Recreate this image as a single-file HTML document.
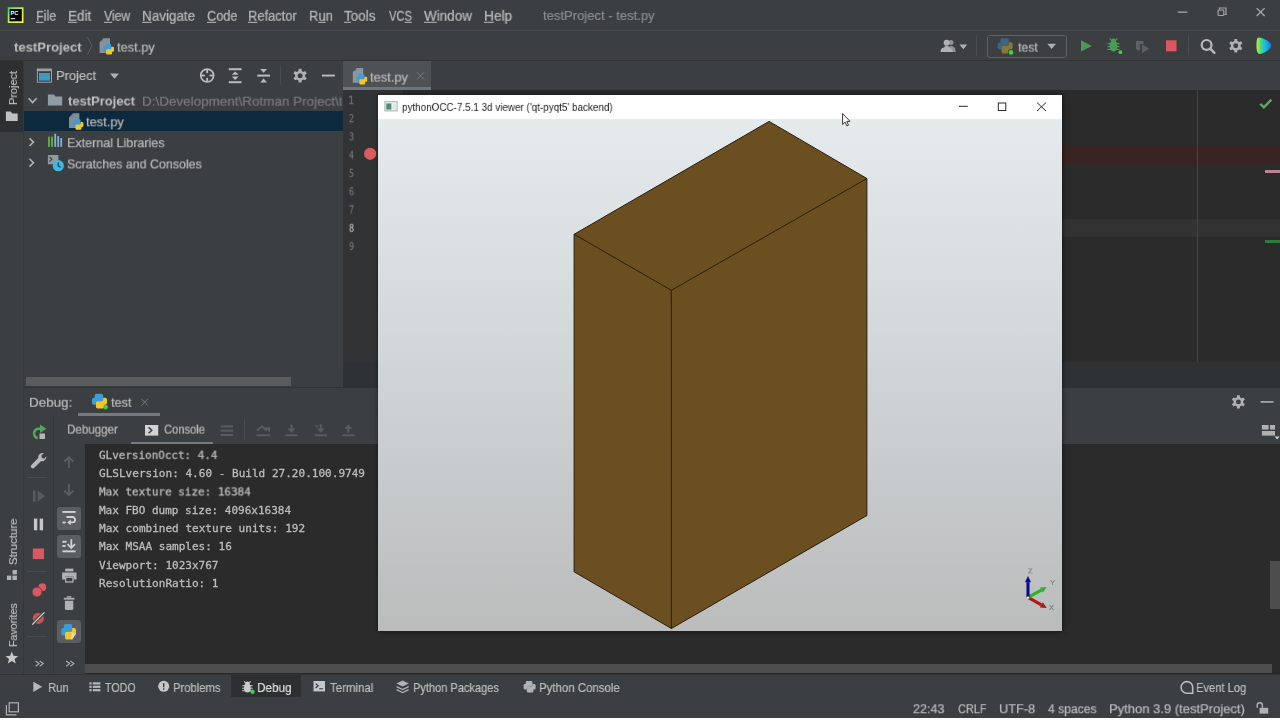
<!DOCTYPE html>
<html lang="en">
<head>
<meta charset="utf-8">
<title>testProject - test.py</title>
<style>
html,body{margin:0;padding:0;background:#3c3f41;overflow:hidden}
#app{position:relative;width:1280px;height:720px;overflow:hidden;background:#3c3f41;font-family:"Liberation Sans",Arial,sans-serif;font-size:13px;color:#bbb}
.b{position:absolute;box-sizing:border-box}
.i{position:absolute;display:block;overflow:visible}
.t{position:absolute;white-space:pre;line-height:0;transform-origin:0 50%;display:block;will-change:transform;-webkit-text-stroke:0.22px currentColor}
.t u{text-decoration:underline;text-decoration-thickness:1px;text-underline-offset:1px}
.v{transform-origin:0 0}
.m{font-family:"DejaVu Sans Mono","Liberation Mono",monospace;-webkit-text-stroke-width:0.3px}

</style>
</head>
<body>
<div id="app">
<div class="b menubar" style="left:0px;top:0px;width:1280px;height:30px;background:#3c3f41;"></div>
<div class="b " style="left:0px;top:30px;width:1280px;height:1px;background:#4b4e50;"></div>
<div class="b navbar" style="left:0px;top:31px;width:1280px;height:29px;background:#3c3f41;"></div>
<div class="b " style="left:0px;top:60px;width:1280px;height:1px;background:#323232;"></div>
<div class="b stripe" style="left:0px;top:61px;width:24px;height:614px;background:#3c3f41;border-right:1px solid #35383a;"></div>
<div class="b stripe-sel" style="left:0px;top:61px;width:23px;height:71px;background:#2d2f30;"></div>
<div class="b project" style="left:24px;top:61px;width:319px;height:326px;background:#3c3f41;"></div>
<div class="b sel" style="left:24px;top:110.6px;width:319px;height:20.4px;background:#0d293e;"></div>
<div class="b " style="left:26px;top:377px;width:265px;height:9px;background:#595b5d;"></div>
<div class="b tabs" style="left:343px;top:61px;width:937px;height:29px;background:#3c3f41;"></div>
<div class="b tab" style="left:343px;top:61px;width:88px;height:29px;background:#4e5254;"></div>
<div class="b " style="left:343px;top:86.6px;width:87.7px;height:3.4px;background:#6e757b;"></div>
<div class="b editor" style="left:343px;top:90px;width:937px;height:297px;background:#2b2b2b;"></div>
<div class="b gutter" style="left:343px;top:90px;width:60px;height:297px;background:#313335;"></div>
<div class="b " style="left:403px;top:144.5px;width:877px;height:18.5px;background:#3a2323;"></div>
<div class="b " style="left:403px;top:219px;width:877px;height:18px;background:#323232;"></div>
<div class="b " style="left:1197px;top:90px;width:1px;height:272.4px;background:#424445;"></div>
<div class="b breadcrumbs" style="left:343px;top:362.4px;width:937px;height:24.6px;background:#2f3234;"></div>
<div class="b " style="left:1265px;top:170px;width:15px;height:3px;background:#c0809a;"></div>
<div class="b " style="left:1265px;top:240px;width:15px;height:3px;background:#2a7d3c;"></div>
<div class="b " style="left:24px;top:387px;width:1256px;height:1px;background:#323232;"></div>
<div class="b debug-head" style="left:24px;top:388px;width:1256px;height:28px;background:#3c3f41;"></div>
<div class="b " style="left:78px;top:413px;width:82px;height:3px;background:#747a80;"></div>
<div class="b debug-tabs" style="left:24px;top:416px;width:1256px;height:28px;background:#3c3f41;"></div>
<div class="b " style="left:131px;top:442px;width:82px;height:3px;background:#747a80;"></div>
<div class="b " style="left:24px;top:444px;width:30px;height:231px;background:#3c3f41;"></div>
<div class="b " style="left:53px;top:416px;width:1px;height:259px;background:#35383a;"></div>
<div class="b " style="left:54px;top:444px;width:31px;height:231px;background:#3c3f41;"></div>
<div class="b console" style="left:84.5px;top:444px;width:1195.5px;height:231px;background:#2b2b2b;"></div>
<div class="b " style="left:84.5px;top:664px;width:1187.9px;height:9.1px;background:#4e4e4e;"></div>
<div class="b " style="left:1270px;top:561px;width:10px;height:48px;background:#4d4d4d;"></div>
<div class="b " style="left:27px;top:477px;width:20px;height:1px;background:#4a4d4f;"></div>
<div class="b " style="left:27px;top:571px;width:20px;height:1px;background:#4a4d4f;"></div>
<div class="b " style="left:27px;top:636px;width:20px;height:1px;background:#4a4d4f;"></div>
<div class="b " style="left:57px;top:507px;width:24px;height:23px;background:#5a5e61;border-radius:3px;"></div>
<div class="b " style="left:57px;top:535px;width:24px;height:23px;background:#5a5e61;border-radius:3px;"></div>
<div class="b " style="left:57px;top:620px;width:24px;height:23px;background:#5a5e61;border-radius:3px;"></div>
<div class="b " style="left:0px;top:674px;width:1280px;height:1px;background:#323232;"></div>
<div class="b toolbar-bottom" style="left:0px;top:675px;width:1280px;height:25px;background:#3c3f41;"></div>
<div class="b " style="left:231px;top:675px;width:70px;height:22px;background:#2d2f30;"></div>
<div class="b status" style="left:0px;top:700px;width:1280px;height:18px;background:#3c3f41;"></div>
<div class="b " style="left:0px;top:718px;width:1280px;height:2px;background:#ffffff;"></div>
<div class="b " style="left:976px;top:35px;width:1px;height:21px;background:#494c4e;"></div>
<div class="b " style="left:1188px;top:35px;width:1px;height:20px;background:#494c4e;"></div>
<div class="b " style="left:280px;top:65px;width:1px;height:20px;background:#494c4e;"></div>
<div class="b " style="left:244px;top:419px;width:1px;height:21px;background:#494c4e;"></div>
<div class="b " style="left:987px;top:34.5px;width:79.5px;height:23px;background:transparent;border:1px solid #5e6163;border-radius:3px;"></div>
<div class="b viewer" style="left:378.4px;top:94.5px;width:683.2px;height:536.5px;background:#ffffff;box-shadow:0 0 5px 0.5px rgba(0,0,0,.6);"></div>
<div class="b viewport" style="left:378.4px;top:118.9px;width:683.2px;height:512.1px;background:linear-gradient(#e5eaed,#cfd4d6 50%,#bbbcbc);"></div>
<svg class="i" style="left:378.5px;top:119px;" width="683" height="512" viewBox="0 0 683 512"><polygon points="390.1,2.4 487.9,59.5 487.9,396.5 292.4,509.5 195.1,452.8 195.1,115.3" fill="#6b4f20" stroke="#2a1f0c" stroke-width="1" stroke-linejoin="round"/><polyline points="195.1,115.3 292.3,171.3 487.9,59.5" fill="none" stroke="#2a1f0c" stroke-width="1"/><polyline points="292.3,171.3 292.4,509.5" fill="none" stroke="#2a1f0c" stroke-width="1"/></svg>
<svg class="i" style="left:6px;top:6px;" width="19" height="18" viewBox="6 6 19 18"><defs><linearGradient id="pcg" x1="0" y1="0" x2="1" y2="1"><stop offset="0" stop-color="#21d789"/><stop offset=".35" stop-color="#b6e84a"/><stop offset="1" stop-color="#fcf84a"/></linearGradient></defs><rect x="7.75" y="7.25" width="15.75" height="15.75" fill="url(#pcg)" /><rect x="9.5" y="9" width="12.3" height="12.3" fill="#000" /><text x="10.5" y="14.9" font-family="Liberation Sans,Arial,sans-serif" font-weight="bold" font-size="5.6" fill="#fff">PC</text><rect x="10.6" y="18.2" width="4.6" height="1" fill="#fff" /></svg>
<svg class="i" style="left:1176px;top:7px;" width="17" height="10" viewBox="1176 7 17 10"><rect x="1177.8" y="11.5" width="9.6" height="1.3" fill="#a6a8aa" /></svg>
<svg class="i" style="left:1216px;top:6px;" width="12" height="11" viewBox="1216 6 12 11"><rect x="1218.1" y="10" width="5.7" height="5.5" fill="none" stroke="#a2a4a6" stroke-width="1.2" rx="0.8"/><polyline points="1219.4,9.4 1219.4,8 1226,8 1226,14.4 1224.4,14.4" fill="none" stroke="#a2a4a6" stroke-width="1.2" /></svg>
<svg class="i" style="left:1255px;top:7px;" width="12" height="10" viewBox="1255 7 12 10"><polyline points="1256.7,8.1 1264.6,16" fill="none" stroke="#a8aaac" stroke-width="1.3" /><polyline points="1264.6,8.1 1256.7,16" fill="none" stroke="#a8aaac" stroke-width="1.3" /></svg>
<svg class="i" style="left:86px;top:36px;" width="8" height="20" viewBox="86 36 8 20"><polyline points="87.6,37.3 92,45.8 87.6,54.3" fill="none" stroke="#5e6163" stroke-width="1" /></svg>
<svg class="i" style="left:98px;top:37px;" width="17" height="19" viewBox="98 37 17 19"><polygon points="103.5,38.2 110,38.2 110,52.9 99.6,52.9 99.6,42.1" fill="#9aa7b0" opacity=".8"/><polygon points="99.6,41.5 102.9,41.5 102.9,38.2" fill="#3c3f41" opacity=".35"/><g opacity="1.0"><path d="M106.51 44.1 H109.93 Q111.22 44.1 111.22 45.36 V48.3 Q111.22 49.35 109.93 49.35 H107.37 Q106.08 49.35 106.08 50.61 V51.87 H104.58 Q103.3 51.87 103.3 50.61 V48.09 Q103.3 46.83 104.58 46.83 H105.23 V45.36 Q105.23 44.1 106.51 44.1Z" fill="#3c9dd8" /><path d="M110.79 54.6 H107.37 Q106.08 54.6 106.08 53.34 V50.4 Q106.08 49.35 107.37 49.35 H109.93 Q111.22 49.35 111.22 48.09 V46.83 H112.72 Q114 46.83 114 48.09 V50.61 Q114 51.87 112.72 51.87 H112.07 V53.34 Q112.07 54.6 110.79 54.6Z" fill="#f4c62a" /></g></svg>
<svg class="i" style="left:939px;top:38px;" width="18" height="15" viewBox="939 38 18 15"><circle cx="951" cy="42.6" r="2.5" fill="#8f9193" /><path d="M947.5 51.9 C947.5 47 949 46 951 46 C953.5 46 955.6 47.5 955.6 51.9Z" fill="#8f9193" /><circle cx="946.6" cy="42.8" r="3" fill="#afb1b3" /><path d="M940.6 51.9 C940.6 48.5 942.5 47.6 944.6 47.2 L944.6 46 L948.6 46 L948.6 47.2 C950.8 47.6 952.6 48.5 952.6 51.9Z" fill="#afb1b3" /></svg>
<svg class="i" style="left:958px;top:43px;" width="11" height="8" viewBox="958 43 11 8"><polygon points="959.5,44.6 967.2,44.6 963.35,49.3" fill="#afb1b3" /></svg>
<svg class="i" style="left:996px;top:37px;" width="19" height="19" viewBox="996 37 19 19"><g opacity="0.42"><path d="M1002.17 38.2 H1006.94 Q1008.73 38.2 1008.73 40.05 V44.36 Q1008.73 45.9 1006.94 45.9 H1003.36 Q1001.57 45.9 1001.57 47.75 V49.6 H999.49 Q997.7 49.6 997.7 47.75 V44.05 Q997.7 42.2 999.49 42.2 H1000.38 V40.05 Q1000.38 38.2 1002.17 38.2Z" fill="#3c9dd8" /><path d="M1008.13 53.6 H1003.36 Q1001.57 53.6 1001.57 51.75 V47.44 Q1001.57 45.9 1003.36 45.9 H1006.94 Q1008.73 45.9 1008.73 44.05 V42.2 H1010.81 Q1012.6 42.2 1012.6 44.05 V47.75 Q1012.6 49.6 1010.81 49.6 H1009.92 V51.75 Q1009.92 53.6 1008.13 53.6Z" fill="#f4c62a" /></g><circle cx="1011" cy="52.4" r="3.1" fill="#3c3f41" /><circle cx="1011" cy="52.4" r="2.3" fill="#3fd13f" /></svg>
<svg class="i" style="left:1046px;top:42px;" width="11" height="8" viewBox="1046 42 11 8"><polygon points="1047.3,43.7 1056,43.7 1051.65,49" fill="#afb1b3" /></svg>
<svg class="i" style="left:1080px;top:39px;" width="13" height="14" viewBox="1080 39 13 14"><polygon points="1081,40.2 1091.8,45.9 1081,51.6" fill="#499c54" /></svg>
<svg class="i" style="left:1106px;top:37px;" width="18" height="19" viewBox="1106 37 18 19"><ellipse cx="1113.5" cy="46.13" rx="4" ry="5.38" fill="#499c54"/><circle cx="1113.5" cy="41.02" r="2.48" fill="#499c54" /><polyline points="1107.43,43.57 1119.57,43.57" fill="none" stroke="#499c54" stroke-width="1.173" /><polyline points="1107.43,46.54 1119.57,46.54" fill="none" stroke="#499c54" stroke-width="1.173" /><polyline points="1107.43,49.44 1119.57,49.44" fill="none" stroke="#499c54" stroke-width="1.173" /><polyline points="1109.7,38.4 1112.12,41.16" fill="none" stroke="#499c54" stroke-width="1.173" /><polyline points="1117.3,38.4 1114.88,41.16" fill="none" stroke="#499c54" stroke-width="1.173" /><circle cx="1120.4" cy="52.2" r="2.6" fill="#3c3f41" /><circle cx="1120.4" cy="52.2" r="1.9" fill="#3fd13f" /></svg>
<svg class="i" style="left:1134px;top:39px;" width="17" height="15" viewBox="1134 39 17 15"><path d="M1136 41 H1143.5 V44 H1140 V49.5 L1138.5 51 L1136 48.5Z" fill="#5e6163" /><polygon points="1142.2,44.6 1149.4,48.8 1142.2,53" fill="#5e6163" /></svg>
<svg class="i" style="left:1165px;top:39px;" width="13" height="14" viewBox="1165 39 13 14"><rect x="1166" y="40.3" width="10.5" height="11" fill="#db5860" /></svg>
<svg class="i" style="left:1199px;top:37px;" width="18" height="18" viewBox="1199 37 18 18"><circle cx="1206.6" cy="44.9" r="4.9" fill="none" stroke="#b9bbbd" stroke-width="2.2" /><polyline points="1210.2,48.6 1214.4,52.9" fill="none" stroke="#b9bbbd" stroke-width="2.4" stroke-linecap="round"/></svg>
<svg class="i" style="left:1228px;top:38px;" width="16" height="16" viewBox="1228 38 16 16"><path d="M1234.24 40.98 L1234.43 38.94 L1237.17 38.94 L1237.36 40.98 L1239.1 41.99 L1240.97 41.13 L1242.34 43.51 L1240.67 44.7 L1240.67 46.7 L1242.34 47.89 L1240.97 50.27 L1239.1 49.41 L1237.36 50.42 L1237.17 52.46 L1234.43 52.46 L1234.24 50.42 L1232.5 49.41 L1230.63 50.27 L1229.26 47.89 L1230.93 46.7 L1230.93 44.7 L1229.26 43.51 L1230.63 41.13 L1232.5 41.99Z M1238.28 45.7 A2.48 2.48 0 1 0 1233.32 45.7 A2.48 2.48 0 1 0 1238.28 45.7Z" fill="#afb1b3" fill-rule="evenodd" stroke-linejoin="round"/></svg>
<svg class="i" style="left:1255px;top:36px;" width="18" height="20" viewBox="1255 36 18 20"><defs><linearGradient id="spg" x1="0" y1="0" x2="1" y2="0"><stop offset="0" stop-color="#d4ea3c"/><stop offset=".3" stop-color="#3ddc84"/><stop offset=".6" stop-color="#18b8e8"/><stop offset="1" stop-color="#1f6fe0"/></linearGradient></defs><path d="M1258.6 37.6 C1263 37.6 1271.4 42.2 1271.4 45.6 C1271.4 49.3 1263.5 54 1259.6 54 C1257.4 54 1256.5 50.5 1256.5 45.8 C1256.5 41 1257 37.6 1258.6 37.6Z" fill="url(#spg)" /></svg>
<svg class="i" style="left:35px;top:67px;" width="18" height="17" viewBox="35 67 18 17"><rect x="37.4" y="69.2" width="14.1" height="13" fill="#3c3f41" stroke="#9aa0a6" stroke-width="1" /><rect x="36.9" y="68.7" width="15.1" height="2.5" fill="#9aa0a6" /><rect x="39" y="73" width="11" height="7.6" fill="#3a9bc4" /></svg>
<svg class="i" style="left:109px;top:72px;" width="11" height="8" viewBox="109 72 11 8"><polygon points="110,73.4 119,73.4 114.5,78.7" fill="#afb1b3" /></svg>
<svg class="i" style="left:198px;top:67px;" width="18" height="17" viewBox="198 67 18 17"><circle cx="207.2" cy="75.5" r="6.4" fill="none" stroke="#b9bbbd" stroke-width="1.8" /><polyline points="207.2,69 207.2,73.2" fill="none" stroke="#b9bbbd" stroke-width="1.8" /><polyline points="207.2,77.8 207.2,82" fill="none" stroke="#b9bbbd" stroke-width="1.8" /><polyline points="200.7,75.5 204.9,75.5" fill="none" stroke="#b9bbbd" stroke-width="1.8" /><polyline points="209.5,75.5 213.7,75.5" fill="none" stroke="#b9bbbd" stroke-width="1.8" /></svg>
<svg class="i" style="left:227px;top:67px;" width="16" height="17" viewBox="227 67 16 17"><rect x="228.8" y="68.2" width="12.7" height="2" fill="#b9bbbd" /><rect x="228.8" y="81.2" width="12.7" height="2" fill="#b9bbbd" /><polygon points="231.8,74.8 238.6,74.8 235.2,71.4" fill="#b9bbbd" /><polygon points="231.8,76.6 238.6,76.6 235.2,80" fill="#b9bbbd" /></svg>
<svg class="i" style="left:256px;top:67px;" width="15" height="17" viewBox="256 67 15 17"><rect x="257.3" y="74.6" width="12.7" height="2" fill="#b9bbbd" /><polygon points="260.2,69 267,69 263.6,72.8" fill="#b9bbbd" /><polygon points="260.2,82.4 267,82.4 263.6,78.6" fill="#b9bbbd" /></svg>
<svg class="i" style="left:292px;top:67px;" width="16" height="17" viewBox="292 67 16 17"><path d="M298.51 70.92 L298.71 68.84 L301.49 68.84 L301.69 70.92 L303.45 71.93 L305.35 71.07 L306.74 73.47 L305.04 74.68 L305.04 76.72 L306.74 77.93 L305.35 80.33 L303.45 79.47 L301.69 80.48 L301.49 82.56 L298.71 82.56 L298.51 80.48 L296.75 79.47 L294.85 80.33 L293.46 77.93 L295.16 76.72 L295.16 74.68 L293.46 73.47 L294.85 71.07 L296.75 71.93Z M302.62 75.7 A2.52 2.52 0 1 0 297.58 75.7 A2.52 2.52 0 1 0 302.62 75.7Z" fill="#afb1b3" fill-rule="evenodd" stroke-linejoin="round"/></svg>
<svg class="i" style="left:320px;top:73px;" width="16" height="5" viewBox="320 73 16 5"><rect x="321.9" y="74.6" width="12.9" height="1.9" fill="#b9bbbd" /></svg>
<svg class="i" style="left:4px;top:109px;" width="15" height="14" viewBox="4 109 15 14"><path d="M5.9 111.5 H10.8 L12.2 113.5 H17.7 V121 H5.9Z" fill="#bfc1c3" /></svg>
<svg class="i" style="left:5px;top:568px;" width="14" height="14" viewBox="5 568 14 14"><rect x="6.9" y="575.6" width="4.4" height="4.4" fill="#afb1b3" /><rect x="12.5" y="575.6" width="4.4" height="4.4" fill="#afb1b3" /><rect x="12.5" y="570" width="4.4" height="4.4" fill="#afb1b3" /></svg>
<svg class="i" style="left:4px;top:650px;" width="16" height="15" viewBox="4 650 16 15"><polygon points="11.8,651.5 13.5,655.85 18.17,656.13 14.56,659.1 15.74,663.62 11.8,661.1 7.86,663.62 9.04,659.1 5.43,656.13 10.1,655.85" fill="#c8c8c8" /></svg>
<svg class="i" style="left:27px;top:96px;" width="12" height="9" viewBox="27 96 12 9"><polyline points="28.6,98.2 32.6,102.6 36.6,98.2" fill="none" stroke="#afb1b3" stroke-width="1.6" /></svg>
<svg class="i" style="left:46px;top:93px;" width="18" height="14" viewBox="46 93 18 14"><path d="M47.9 94.5 H54 L55.6 96.6 H62.2 V105.6 H47.9Z" fill="#909ca4" /></svg>
<svg class="i" style="left:68px;top:112px;" width="17" height="19" viewBox="68 112 17 19"><polygon points="72.9,113.3 79.4,113.3 79.4,128 69,128 69,117.2" fill="#9aa7b0" opacity=".8"/><polygon points="69,116.6 72.3,116.6 72.3,113.3" fill="#3c3f41" opacity=".35"/><g opacity="1.0"><path d="M75.91 119.2 H79.33 Q80.62 119.2 80.62 120.46 V123.4 Q80.62 124.45 79.33 124.45 H76.77 Q75.48 124.45 75.48 125.71 V126.97 H73.98 Q72.7 126.97 72.7 125.71 V123.19 Q72.7 121.93 73.98 121.93 H74.63 V120.46 Q74.63 119.2 75.91 119.2Z" fill="#3c9dd8" /><path d="M80.19 129.7 H76.77 Q75.48 129.7 75.48 128.44 V125.5 Q75.48 124.45 76.77 124.45 H79.33 Q80.62 124.45 80.62 123.19 V121.93 H82.12 Q83.4 121.93 83.4 123.19 V125.71 Q83.4 126.97 82.12 126.97 H81.47 V128.44 Q81.47 129.7 80.19 129.7Z" fill="#f4c62a" /></g></svg>
<svg class="i" style="left:28px;top:136px;" width="8" height="12" viewBox="28 136 8 12"><polyline points="29.5,138.2 33.4,142.1 29.5,146" fill="none" stroke="#afb1b3" stroke-width="1.6" /></svg>
<svg class="i" style="left:46px;top:132px;" width="18" height="16" viewBox="46 132 18 16"><rect x="48.1" y="136.6" width="1.8" height="10.3" fill="#62b543" /><rect x="51.1" y="136.6" width="1.8" height="10.3" fill="#62b543" /><rect x="54.3" y="133.8" width="1.8" height="13.1" fill="#7fb2d6" /><rect x="57.3" y="136" width="1.8" height="10.9" fill="#7fb2d6" /><rect x="60.3" y="138" width="1.8" height="8.9" fill="#7fb2d6" /></svg>
<svg class="i" style="left:28px;top:157px;" width="8" height="12" viewBox="28 157 8 12"><polyline points="29.5,158.8 33.4,162.7 29.5,166.6" fill="none" stroke="#afb1b3" stroke-width="1.6" /></svg>
<svg class="i" style="left:46px;top:154px;" width="19" height="19" viewBox="46 154 19 19"><rect x="47.9" y="155" width="10.5" height="9.2" fill="#8f9ba3" /><polyline points="49.5,157 52,159.3 49.5,161.6" fill="none" stroke="#3c3f41" stroke-width="1.1" /><circle cx="58.3" cy="165.7" r="5.6" fill="#40b6e0" /><polyline points="58.3,162.6 58.3,165.9 60.6,167.2" fill="none" stroke="#1f3b4a" stroke-width="1.2" /></svg>
<svg class="i" style="left:351px;top:67px;" width="18" height="19" viewBox="351 67 18 19"><polygon points="356.7,68 363.2,68 363.2,82.7 352.8,82.7 352.8,71.9" fill="#9aa7b0" opacity=".8"/><polygon points="352.8,71.3 356.1,71.3 356.1,68" fill="#3c3f41" opacity=".35"/><g opacity="1.0"><path d="M359.71 73.9 H363.13 Q364.42 73.9 364.42 75.16 V78.1 Q364.42 79.15 363.13 79.15 H360.57 Q359.28 79.15 359.28 80.41 V81.67 H357.78 Q356.5 81.67 356.5 80.41 V77.89 Q356.5 76.63 357.78 76.63 H358.43 V75.16 Q358.43 73.9 359.71 73.9Z" fill="#3c9dd8" /><path d="M363.99 84.4 H360.57 Q359.28 84.4 359.28 83.14 V80.2 Q359.28 79.15 360.57 79.15 H363.13 Q364.42 79.15 364.42 77.89 V76.63 H365.92 Q367.2 76.63 367.2 77.89 V80.41 Q367.2 81.67 365.92 81.67 H365.27 V83.14 Q365.27 84.4 363.99 84.4Z" fill="#f4c62a" /></g></svg>
<svg class="i" style="left:415px;top:71px;" width="11" height="10" viewBox="415 71 11 10"><polyline points="417,72.3 424,79.4" fill="none" stroke="#7a7d7f" stroke-width="1" /><polyline points="424,72.3 417,79.4" fill="none" stroke="#7a7d7f" stroke-width="1" /></svg>
<svg class="i" style="left:363px;top:146px;" width="15" height="15" viewBox="363 146 15 15"><circle cx="370.1" cy="153.8" r="6.1" fill="#db5c5c" /></svg>
<svg class="i" style="left:1258px;top:97px;" width="16" height="13" viewBox="1258 97 16 13"><polyline points="1260.3,103.8 1263.9,107.4 1271.4,99.6" fill="none" stroke="#5aaa62" stroke-width="2.4" /></svg>
<svg class="i" style="left:383px;top:100px;" width="16" height="13" viewBox="383 100 16 13"><rect x="384.9" y="101.7" width="12.2" height="9.2" fill="#eef6f2" stroke="#a9adab" stroke-width="1" /><rect x="386.3" y="103.4" width="5.1" height="6.2" fill="#4f8b78" /><rect x="392.6" y="103.4" width="3" height="6.2" fill="#d5ebe2" /></svg>
<svg class="i" style="left:958px;top:104px;" width="11" height="5" viewBox="958 104 11 5"><rect x="959" y="105.8" width="8.8" height="1" fill="#2a2a2a" /></svg>
<svg class="i" style="left:996px;top:101px;" width="12" height="12" viewBox="996 101 12 12"><rect x="998.3" y="103" width="7.5" height="7.5" fill="none" stroke="#2a2a2a" stroke-width="1" /></svg>
<svg class="i" style="left:1035px;top:101px;" width="13" height="12" viewBox="1035 101 13 12"><polyline points="1037,102.6 1046,111" fill="none" stroke="#2a2a2a" stroke-width="1" /><polyline points="1046,102.6 1037,111" fill="none" stroke="#2a2a2a" stroke-width="1" /></svg>
<svg class="i" style="left:841px;top:112px;" width="11" height="16" viewBox="841 112 11 16"><path d="M842.6 113.6 L842.6 124.4 L845.1 122.1 L846.9 125.9 L848.5 125.1 L846.8 121.5 L850 121.3Z" fill="#ffffff" stroke="#222" stroke-width="0.9" stroke-linejoin="round"/></svg>
<svg class="i" style="left:1019px;top:569px;" width="42" height="47" viewBox="1019 569 42 47"><polyline points="1028,597.4 1041.39,604.88" fill="none" stroke="#aa1a1a" stroke-width="3.1" /><polygon points="1046.8,607.9 1039.92,607.5 1042.85,602.26" fill="#aa1a1a" /><polyline points="1028,597.4 1041.36,590.08" fill="none" stroke="#2fb02f" stroke-width="3.1" /><polygon points="1046.8,587.1 1042.8,592.71 1039.92,587.45" fill="#2fb02f" /><polyline points="1028,597.4 1028,582.2" fill="none" stroke="#0a0a8e" stroke-width="3.1" /><polygon points="1028,576 1031,582.2 1025,582.2" fill="#0a0a8e" /><circle cx="1028" cy="597.6" r="1.2" fill="#f0f0f0" /></svg>
<svg class="i" style="left:90px;top:392px;" width="20" height="19" viewBox="90 392 20 19"><g opacity="1.0"><path d="M96.5 393.8 H101.3 Q103.1 393.8 103.1 395.58 V399.72 Q103.1 401.2 101.3 401.2 H97.7 Q95.9 401.2 95.9 402.98 V404.75 H93.8 Q92 404.75 92 402.98 V399.42 Q92 397.65 93.8 397.65 H94.7 V395.58 Q94.7 393.8 96.5 393.8Z" fill="#3c9dd8" /><path d="M102.5 408.6 H97.7 Q95.9 408.6 95.9 406.82 V402.68 Q95.9 401.2 97.7 401.2 H101.3 Q103.1 401.2 103.1 399.42 V397.65 H105.2 Q107 397.65 107 399.42 V402.98 Q107 404.75 105.2 404.75 H104.3 V406.82 Q104.3 408.6 102.5 408.6Z" fill="#f4c62a" /></g><circle cx="105.6" cy="407.1" r="2.4" fill="#3fd13f" /></svg>
<svg class="i" style="left:140px;top:397px;" width="10" height="10" viewBox="140 397 10 10"><polyline points="141.4,398.8 148,405.6" fill="none" stroke="#7a7d7f" stroke-width="1" /><polyline points="148,398.8 141.4,405.6" fill="none" stroke="#7a7d7f" stroke-width="1" /></svg>
<svg class="i" style="left:1230px;top:394px;" width="17" height="16" viewBox="1230 394 17 16"><path d="M1236.86 397.25 L1237.05 395.24 L1239.75 395.24 L1239.94 397.25 L1241.65 398.24 L1243.5 397.4 L1244.85 399.74 L1243.19 400.91 L1243.19 402.89 L1244.85 404.06 L1243.5 406.4 L1241.65 405.56 L1239.94 406.55 L1239.75 408.56 L1237.05 408.56 L1236.86 406.55 L1235.15 405.56 L1233.3 406.4 L1231.95 404.06 L1233.61 402.89 L1233.61 400.91 L1231.95 399.74 L1233.3 397.4 L1235.15 398.24Z M1240.85 401.9 A2.45 2.45 0 1 0 1235.95 401.9 A2.45 2.45 0 1 0 1240.85 401.9Z" fill="#afb1b3" fill-rule="evenodd" stroke-linejoin="round"/></svg>
<svg class="i" style="left:1259px;top:400px;" width="16" height="4" viewBox="1259 400 16 4"><rect x="1260.6" y="401.1" width="12.9" height="1.6" fill="#afb1b3" /></svg>
<svg class="i" style="left:1260px;top:424px;" width="20" height="17" viewBox="1260 424 20 17"><rect x="1261.9" y="425" width="6.7" height="4.6" fill="#afb1b3" /><rect x="1270" y="425" width="5" height="4.6" fill="#afb1b3" /><rect x="1261.9" y="431" width="13.1" height="4.6" fill="#afb1b3" /><polygon points="1274.6,436.6 1279.6,436.6 1277.1,439.4" fill="#d0d0d0" /></svg>
<svg class="i" style="left:30px;top:423px;" width="18" height="18" viewBox="30 423 18 18"><path d="M37.6 438.2 A4.9 4.9 0 0 1 37.9 428.7 H40.4" fill="none" stroke="#4fa85a" stroke-width="2.5" /><polygon points="40,424.5 46.4,428.8 40,433" fill="#4fa85a" /><rect x="39.5" y="433.5" width="5.5" height="5.5" fill="#b4b6b8" /></svg>
<svg class="i" style="left:30px;top:452px;" width="18" height="17" viewBox="30 452 18 17"><path d="M31.4 464.9 L38.2 458.1 A4.6 4.6 0 0 1 43.9 453.1 L41.2 455.8 L42 458 L44.2 458.8 L46.4 456.2 A4.6 4.6 0 0 1 41 461.2 L34.3 467.8 A2 2 0 0 1 31.4 464.9Z" fill="#b7b9bb" /></svg>
<svg class="i" style="left:31px;top:489px;" width="16" height="15" viewBox="31 489 16 15"><rect x="32.9" y="490.4" width="2.7" height="11.4" fill="#585b5d" /><polygon points="37.6,490.4 45,496.1 37.6,501.8" fill="#585b5d" /></svg>
<svg class="i" style="left:32px;top:517px;" width="13" height="15" viewBox="32 517 13 15"><rect x="33.9" y="518.6" width="3.4" height="11.7" fill="#c4c6c8" /><rect x="39.7" y="518.6" width="3.4" height="11.7" fill="#c4c6c8" /></svg>
<svg class="i" style="left:31px;top:547px;" width="15" height="14" viewBox="31 547 15 14"><rect x="32.8" y="548.5" width="11.2" height="10.6" fill="#db5860" /></svg>
<svg class="i" style="left:30px;top:581px;" width="18" height="18" viewBox="30 581 18 18"><circle cx="42.3" cy="587.2" r="3.9" fill="#db5860" /><circle cx="37" cy="592" r="5" fill="#db5860" stroke="#3c3f41" stroke-width="0.8"/></svg>
<svg class="i" style="left:30px;top:610px;" width="17" height="17" viewBox="30 610 17 17"><circle cx="38.3" cy="618.4" r="5.6" fill="#c75450" /><polyline points="32.2,624.6 44.4,612.4" fill="none" stroke="#3c3f41" stroke-width="3" /><polyline points="32.2,624.6 44.4,612.4" fill="none" stroke="#d8d8d8" stroke-width="1.3" /></svg>
<svg class="i" style="left:34px;top:659px;" width="11" height="9" viewBox="34 659 11 9"><polyline points="35.6,661 39.1,663.6 35.6,666.2" fill="none" stroke="#afb1b3" stroke-width="1.1" /><polyline points="39.7,661 43.2,663.6 39.7,666.2" fill="none" stroke="#afb1b3" stroke-width="1.1" /></svg>
<svg class="i" style="left:62px;top:455px;" width="14" height="15" viewBox="62 455 14 15"><polyline points="68.9,457.4 68.9,468" fill="none" stroke="#5e6163" stroke-width="1.7" /><polyline points="64.4,461.6 68.9,457.1 73.4,461.6" fill="none" stroke="#5e6163" stroke-width="1.7" /></svg>
<svg class="i" style="left:62px;top:482px;" width="14" height="15" viewBox="62 482 14 15"><polyline points="68.9,483.8 68.9,494.6" fill="none" stroke="#5e6163" stroke-width="1.7" /><polyline points="64.4,490.6 68.9,495.1 73.4,490.6" fill="none" stroke="#5e6163" stroke-width="1.7" /></svg>
<svg class="i" style="left:60px;top:509px;" width="18" height="18" viewBox="60 509 18 18"><rect x="62.4" y="511" width="13.2" height="1.9" fill="#cfd1d3" /><path d="M66.5 517 H72.4 A2.7 2.7 0 0 1 72.4 522.4 H70" fill="none" stroke="#cfd1d3" stroke-width="1.8" /><polygon points="70.8,519.6 70.8,525.2 67.2,522.4" fill="#cfd1d3" /><rect x="62.4" y="521.5" width="3.2" height="1.9" fill="#cfd1d3" /></svg>
<svg class="i" style="left:60px;top:537px;" width="18" height="18" viewBox="60 537 18 18"><rect x="62.4" y="540.8" width="4.2" height="1.9" fill="#cfd1d3" /><rect x="62.4" y="545" width="3.2" height="1.9" fill="#cfd1d3" /><rect x="62.4" y="550.4" width="13.2" height="1.9" fill="#cfd1d3" /><polyline points="71.3,539.2 71.3,547.4" fill="none" stroke="#cfd1d3" stroke-width="1.8" /><polyline points="67.6,544.2 71.3,547.9 75,544.2" fill="none" stroke="#cfd1d3" stroke-width="1.8" /></svg>
<svg class="i" style="left:61px;top:567px;" width="17" height="17" viewBox="61 567 17 17"><rect x="65.2" y="568.6" width="8.2" height="2.8" fill="#afb1b3" /><path d="M62.1 572.6 H76.5 V579.4 H73.6 V576.6 H65 V579.4 H62.1Z" fill="#afb1b3" /><rect x="65.65" y="577.25" width="7.3" height="4.7" fill="none" stroke="#afb1b3" stroke-width="1.3" /></svg>
<svg class="i" style="left:62px;top:595px;" width="14" height="17" viewBox="62 595 14 17"><rect x="66.8" y="596.2" width="4.6" height="1.4" fill="#afb1b3" /><rect x="63.8" y="597.8" width="10.6" height="1.8" fill="#afb1b3" /><path d="M64.9 600.8 H73.3 V608.6 A1.5 1.5 0 0 1 71.8 610.1 H66.4 A1.5 1.5 0 0 1 64.9 608.6Z" fill="#afb1b3" /></svg>
<svg class="i" style="left:60px;top:622px;" width="19" height="20" viewBox="60 622 19 20"><g opacity="1.0"><path d="M65.64 624 H70.38 Q72.15 624 72.15 625.87 V630.24 Q72.15 631.8 70.38 631.8 H66.82 Q65.05 631.8 65.05 633.67 V635.54 H62.98 Q61.2 635.54 61.2 633.67 V629.93 Q61.2 628.06 62.98 628.06 H63.86 V625.87 Q63.86 624 65.64 624Z" fill="#3c9dd8" /><path d="M71.56 639.6 H66.82 Q65.05 639.6 65.05 637.73 V633.36 Q65.05 631.8 66.82 631.8 H70.38 Q72.15 631.8 72.15 629.93 V628.06 H74.22 Q76 628.06 76 629.93 V633.67 Q76 635.54 74.22 635.54 H73.34 V637.73 Q73.34 639.6 71.56 639.6Z" fill="#f4c62a" /></g><polygon points="70.6,631.5 75.4,634.2 73.6,637.6 71.6,639.4 70.6,637.6 72.4,634.6" fill="#d8dadc" /></svg>
<svg class="i" style="left:65px;top:659px;" width="11" height="9" viewBox="65 659 11 9"><polyline points="66.2,661 69.7,663.6 66.2,666.2" fill="none" stroke="#afb1b3" stroke-width="1.1" /><polyline points="70.3,661 73.8,663.6 70.3,666.2" fill="none" stroke="#afb1b3" stroke-width="1.1" /></svg>
<svg class="i" style="left:144px;top:424px;" width="16" height="13" viewBox="144 424 16 13"><rect x="145" y="425" width="13.2" height="10.6" fill="#d0d2d4" /><polyline points="148.6,427.4 151.8,430.3 148.6,433.2" fill="none" stroke="#3c3f41" stroke-width="1.5" /></svg>
<svg class="i" style="left:219px;top:424px;" width="16" height="14" viewBox="219 424 16 14"><rect x="220.6" y="425.4" width="12.4" height="2" fill="#5a5d5f" /><rect x="220.6" y="429.7" width="12.4" height="2" fill="#5a5d5f" /><rect x="220.6" y="434" width="12.4" height="2" fill="#5a5d5f" /></svg>
<svg class="i" style="left:255px;top:423px;" width="17" height="15" viewBox="255 423 17 15"><polyline points="257,430.4 261.8,426.4 267,430.6" fill="none" stroke="#5a5d5f" stroke-width="1.9" /><polygon points="264.6,427.2 270,427.2 270,432.8" fill="#5a5d5f" /><rect x="256.4" y="434.4" width="13.6" height="1.8" fill="#5a5d5f" /></svg>
<svg class="i" style="left:284px;top:423px;" width="15" height="15" viewBox="284 423 15 15"><polyline points="291.5,424.4 291.5,431" fill="none" stroke="#5a5d5f" stroke-width="2" /><polygon points="287.4,428.4 295.6,428.4 291.5,432.8" fill="#5a5d5f" /><rect x="285.4" y="434.4" width="12.2" height="1.8" fill="#5a5d5f" /></svg>
<svg class="i" style="left:313px;top:423px;" width="16" height="15" viewBox="313 423 16 15"><polyline points="320.8,424.4 320.8,431" fill="none" stroke="#5a5d5f" stroke-width="2" /><polygon points="316.7,428.4 324.9,428.4 320.8,432.8" fill="#5a5d5f" /><rect x="314.8" y="434.4" width="12.2" height="1.8" fill="#5a5d5f" /><polyline points="315.2,426.2 318.6,426.2" fill="none" stroke="#5a5d5f" stroke-width="1.4" /></svg>
<svg class="i" style="left:341px;top:423px;" width="15" height="15" viewBox="341 423 15 15"><polyline points="348.3,426.4 348.3,432.8" fill="none" stroke="#5a5d5f" stroke-width="2" /><polygon points="344.2,428.8 352.4,428.8 348.3,424.4" fill="#5a5d5f" /><rect x="342.2" y="434.4" width="12.2" height="1.8" fill="#5a5d5f" /></svg>
<svg class="i" style="left:32px;top:680px;" width="12" height="13" viewBox="32 680 12 13"><polygon points="33.3,681.7 42.2,686.8 33.3,691.9" fill="#b4b6b8" /></svg>
<svg class="i" style="left:88px;top:681px;" width="14" height="12" viewBox="88 681 14 12"><rect x="89.4" y="682.3" width="2.2" height="2.2" fill="#b4b6b8" /><rect x="92.8" y="682.3" width="7.6" height="2.2" fill="#b4b6b8" /><rect x="89.4" y="685.7" width="2.2" height="2.2" fill="#b4b6b8" /><rect x="92.8" y="685.7" width="7.6" height="2.2" fill="#b4b6b8" /><rect x="89.4" y="689.1" width="2.2" height="2.2" fill="#b4b6b8" /><rect x="92.8" y="689.1" width="7.6" height="2.2" fill="#b4b6b8" /></svg>
<svg class="i" style="left:157px;top:679px;" width="14" height="14" viewBox="157 679 14 14"><circle cx="163.7" cy="686.3" r="5.5" fill="#c4c6c8" /><rect x="163" y="683" width="1.4" height="4.3" fill="#3c3f41" /><rect x="163" y="688.3" width="1.4" height="1.5" fill="#3c3f41" /></svg>
<svg class="i" style="left:240px;top:679px;" width="16" height="16" viewBox="240 679 16 16"><ellipse cx="247.4" cy="687.91" rx="3.42" ry="4.6" fill="#c8cacc"/><circle cx="247.4" cy="683.54" r="2.12" fill="#c8cacc" /><polyline points="242.21,685.73 252.59,685.73" fill="none" stroke="#c8cacc" stroke-width="1.0030000000000001" /><polyline points="242.21,688.26 252.59,688.26" fill="none" stroke="#c8cacc" stroke-width="1.0030000000000001" /><polyline points="242.21,690.74 252.59,690.74" fill="none" stroke="#c8cacc" stroke-width="1.0030000000000001" /><polyline points="244.16,681.3 246.22,683.66" fill="none" stroke="#c8cacc" stroke-width="1.0030000000000001" /><polyline points="250.65,681.3 248.58,683.66" fill="none" stroke="#c8cacc" stroke-width="1.0030000000000001" /><circle cx="252.5" cy="691.8" r="2.2" fill="#3fd13f" /></svg>
<svg class="i" style="left:312px;top:680px;" width="15" height="13" viewBox="312 680 15 13"><rect x="313.5" y="681" width="11.5" height="10.4" fill="#c4c6c8" /><polyline points="315.6,683.6 318.2,685.8 315.6,688" fill="none" stroke="#3c3f41" stroke-width="1.2" /><rect x="319.2" y="688.2" width="3.8" height="1.1" fill="#3c3f41" /></svg>
<svg class="i" style="left:395px;top:679px;" width="15" height="15" viewBox="395 679 15 15"><polygon points="402.6,680.4 408.8,683.4 402.6,686.4 396.4,683.4" fill="#afb1b3" /><polyline points="396.6,686.6 402.6,689.5 408.6,686.6" fill="none" stroke="#afb1b3" stroke-width="1.3" /><polyline points="396.6,689.6 402.6,692.5 408.6,689.6" fill="none" stroke="#afb1b3" stroke-width="1.3" /></svg>
<svg class="i" style="left:522px;top:680px;" width="15" height="14" viewBox="522 680 15 14"><g opacity="1.0"><path d="M527.2 681 H531.04 Q532.48 681 532.48 682.39 V685.64 Q532.48 686.8 531.04 686.8 H528.16 Q526.72 686.8 526.72 688.19 V689.58 H525.04 Q523.6 689.58 523.6 688.19 V685.41 Q523.6 684.02 525.04 684.02 H525.76 V682.39 Q525.76 681 527.2 681Z" fill="#afb1b3" /><path d="M532 692.6 H528.16 Q526.72 692.6 526.72 691.21 V687.96 Q526.72 686.8 528.16 686.8 H531.04 Q532.48 686.8 532.48 685.41 V684.02 H534.16 Q535.6 684.02 535.6 685.41 V688.19 Q535.6 689.58 534.16 689.58 H533.44 V691.21 Q533.44 692.6 532 692.6Z" fill="#afb1b3" /></g></svg>
<svg class="i" style="left:1179px;top:680px;" width="16" height="15" viewBox="1179 680 16 15"><path d="M1186.9 681.6 A5.8 5.8 0 1 0 1186.9 693.2 H1192.7 V687.4 A5.8 5.8 0 0 0 1186.9 681.6Z" fill="none" stroke="#b7b9bb" stroke-width="1.6" /></svg>
<svg class="i" style="left:4px;top:701px;" width="17" height="16" viewBox="4 701 17 16"><rect x="9.2" y="702.8" width="9.2" height="9" fill="none" stroke="#afb1b3" stroke-width="1.2" /><polyline points="6.4,705 6.4,714.8 16.4,714.8" fill="none" stroke="#afb1b3" stroke-width="1.2" /></svg>
<svg class="i" style="left:1255px;top:701px;" width="15" height="15" viewBox="1255 701 15 15"><rect x="1259.6" y="707.8" width="8.6" height="5.8" fill="#afb1b3" /><path d="M1257.2 707.8 V705.4 A2.6 2.6 0 0 1 1262.4 705.4 V707.8" fill="none" stroke="#afb1b3" stroke-width="1.4" /></svg>
<span class="t" style="left:36.0px;top:15.00px;font-size:14px;color:#bbbbbb;transform:translateY(0.80px) scaleX(0.9002);"><u>F</u>ile</span>
<span class="t" style="left:68.44px;top:15.00px;font-size:14px;color:#bbbbbb;transform:translateY(0.80px) scaleX(0.9641);"><u>E</u>dit</span>
<span class="t" style="left:103.6px;top:15.00px;font-size:14px;color:#bbbbbb;transform:translateY(0.80px) scaleX(0.8715);"><u>V</u>iew</span>
<span class="t" style="left:142.04px;top:15.00px;font-size:14px;color:#bbbbbb;transform:translateY(0.80px) scaleX(0.9620);"><u>N</u>avigate</span>
<span class="t" style="left:206.5px;top:15.00px;font-size:14px;color:#bbbbbb;transform:translateY(0.80px) scaleX(0.9085);"><u>C</u>ode</span>
<span class="t" style="left:248.48px;top:15.00px;font-size:14px;color:#bbbbbb;transform:translateY(0.80px) scaleX(0.9206);"><u>R</u>efactor</span>
<span class="t" style="left:309.48px;top:15.00px;font-size:14px;color:#bbbbbb;transform:translateY(0.80px) scaleX(0.9248);">R<u>u</u>n</span>
<span class="t" style="left:343.8px;top:15.00px;font-size:14px;color:#bbbbbb;transform:translateY(0.80px) scaleX(0.9638);"><u>T</u>ools</span>
<span class="t" style="left:388.6px;top:15.00px;font-size:14px;color:#bbbbbb;transform:translateY(0.80px) scaleX(0.7979);">VC<u>S</u></span>
<span class="t" style="left:424.0px;top:15.00px;font-size:14px;color:#bbbbbb;transform:translateY(0.80px) scaleX(0.9629);"><u>W</u>indow</span>
<span class="t" style="left:484.03px;top:15.00px;font-size:14px;color:#bbbbbb;transform:translateY(0.80px) scaleX(0.9748);"><u>H</u>elp</span>
<span class="t" style="left:543.1px;top:15.00px;font-size:13.5px;color:#8a8c8e;transform:translateY(0.90px) scaleX(0.9664);">testProject - test.py</span>
<span class="t" style="left:13.8px;top:47.00px;font-size:13.5px;color:#c0c0c0;font-weight:bold;transform:translateY(0.60px) scaleX(0.9690);-webkit-text-stroke-width:0;">testProject</span>
<span class="t" style="left:117.0px;top:47.00px;font-size:13.5px;color:#bbbbbb;transform:translateY(0.60px) scaleX(0.9496);">test.py</span>
<span class="t" style="left:1018.0px;top:47.00px;font-size:13.5px;color:#bbbbbb;transform:translateY(0.60px) scaleX(0.9087);">test</span>
<span class="t" style="left:55.95px;top:76.00px;font-size:13.5px;color:#bbbbbb;transform:scaleX(0.9548);">Project</span>
<span class="t" style="left:370.3px;top:77.00px;font-size:13.5px;color:#bbbbbb;transform:translateY(0.60px) scaleX(0.9546);">test.py</span>
<span class="t" style="left:67.5px;top:101.00px;font-size:13.5px;color:#c0c0c0;font-weight:bold;transform:translateY(0.50px) scaleX(0.9605);-webkit-text-stroke-width:0;">testProject</span>
<div class="b" style="left:141.5px;top:89px;width:200.5px;height:22px;overflow:hidden"><span class="t" style="left:0;top:12.00px;font-size:13.5px;color:#797b7d;transform:translateY(0.70px) scaleX(0.9973);">D:\Development\Rotman Project\t</span></div>
<span class="t" style="left:86.3px;top:122.00px;font-size:13.5px;color:#bbbbbb;transform:translateY(0.30px) scaleX(0.9521);">test.py</span>
<span class="t" style="left:66.57px;top:143.00px;font-size:13.5px;color:#bbbbbb;transform:translateY(0.20px) scaleX(0.9291);">External Libraries</span>
<span class="t" style="left:66.9px;top:164.00px;font-size:13.5px;color:#bbbbbb;transform:translateY(0.40px) scaleX(0.9217);">Scratches and Consoles</span>
<span class="t m" style="left:348.44px;top:99.00px;font-size:10.5px;color:#6c6f72;transform:translateY(0.80px) scaleX(0.9600);">1</span>
<span class="t m" style="left:349.4px;top:118.00px;font-size:10.5px;color:#6c6f72;transform:translateY(0.08px) scaleX(0.8000);">2</span>
<span class="t m" style="left:349.4px;top:136.00px;font-size:10.5px;color:#6c6f72;transform:translateY(0.36px) scaleX(0.8000);">3</span>
<span class="t m" style="left:349.4px;top:154.00px;font-size:10.5px;color:#6c6f72;transform:translateY(0.64px) scaleX(0.8000);">4</span>
<span class="t m" style="left:349.4px;top:172.00px;font-size:10.5px;color:#6c6f72;transform:translateY(0.92px) scaleX(0.8000);">5</span>
<span class="t m" style="left:349.4px;top:191.00px;font-size:10.5px;color:#6c6f72;transform:translateY(0.20px) scaleX(0.8000);">6</span>
<span class="t m" style="left:349.4px;top:209.00px;font-size:10.5px;color:#6c6f72;transform:translateY(0.48px) scaleX(0.8000);">7</span>
<span class="t m" style="left:349.4px;top:227.00px;font-size:10.5px;color:#a9abad;transform:translateY(0.76px) scaleX(0.8000);">8</span>
<span class="t m" style="left:349.4px;top:246.00px;font-size:10.5px;color:#6c6f72;transform:translateY(0.04px) scaleX(0.8000);">9</span>
<span class="t" style="left:401.6px;top:106.00px;font-size:11.5px;color:#1a1a1a;transform:translateY(0.90px) scaleX(0.8585);-webkit-text-stroke-width:0;">pythonOCC-7.5.1 3d viewer (&#x27;qt-pyqt5&#x27; backend)</span>
<span class="t" style="left:1027.5px;top:571.00px;font-size:7.5px;color:#7a828c;transform:translateY(0.40px) scaleX(0.9600);">Z</span>
<span class="t" style="left:1049.8px;top:582.00px;font-size:7.5px;color:#7a828c;transform:translateY(0.60px) scaleX(1.0400);">Y</span>
<span class="t" style="left:1049.0px;top:608.00px;font-size:7.5px;color:#7a828c;transform:translateY(0.30px);">X</span>
<span class="t" style="left:28.81px;top:402.00px;font-size:13.5px;color:#bbbbbb;transform:translateY(0.80px) scaleX(0.9933);">Debug:</span>
<span class="t" style="left:111.3px;top:402.00px;font-size:13.5px;color:#bbbbbb;transform:translateY(0.80px) scaleX(0.9360);">test</span>
<span class="t" style="left:66.64px;top:429.00px;font-size:13.5px;color:#bbbbbb;transform:translateY(0.60px) scaleX(0.8589);">Debugger</span>
<span class="t" style="left:163.5px;top:429.00px;font-size:13.5px;color:#bbbbbb;transform:translateY(0.60px) scaleX(0.8261);">Console</span>
<span class="t m" style="left:98.5px;top:455.00px;font-size:11px;color:#bcbcbc;transform:translateY(0.80px) scaleX(0.9941);">GLversionOcct: 4.4</span>
<span class="t m" style="left:98.5px;top:474.00px;font-size:11px;color:#bcbcbc;transform:translateY(0.10px) scaleX(1.0042);">GLSLversion: 4.60 - Build 27.20.100.9749</span>
<span class="t m" style="left:98.5px;top:492.00px;font-size:11px;color:#bcbcbc;transform:translateY(0.40px) scaleX(0.9966);">Max texture size: 16384</span>
<span class="t m" style="left:98.5px;top:510.00px;font-size:11px;color:#bcbcbc;transform:translateY(0.70px);">Max FBO dump size: 4096x16384</span>
<span class="t m" style="left:98.5px;top:529.00px;font-size:11px;color:#bcbcbc;transform:scaleX(1.0038);">Max combined texture units: 192</span>
<span class="t m" style="left:98.5px;top:547.00px;font-size:11px;color:#bcbcbc;transform:translateY(0.30px) scaleX(1.0028);">Max MSAA samples: 16</span>
<span class="t m" style="left:98.5px;top:565.00px;font-size:11px;color:#bcbcbc;transform:translateY(0.60px) scaleX(1.0025);">Viewport: 1023x767</span>
<span class="t m" style="left:98.5px;top:583.00px;font-size:11px;color:#bcbcbc;transform:translateY(0.90px) scaleX(1.0025);">ResolutionRatio: 1</span>
<span class="t" style="left:47.96px;top:688.00px;font-size:13.5px;color:#bbbbbb;transform:scaleX(0.8384);">Run</span>
<span class="t" style="left:104.7px;top:688.00px;font-size:13.5px;color:#bbbbbb;transform:scaleX(0.7921);">TODO</span>
<span class="t" style="left:172.87px;top:688.00px;font-size:13.5px;color:#bbbbbb;transform:scaleX(0.8317);">Problems</span>
<span class="t" style="left:256.83px;top:688.00px;font-size:13.5px;color:#dcdcdc;transform:scaleX(0.8701);">Debug</span>
<span class="t" style="left:329.9px;top:688.00px;font-size:13.5px;color:#bbbbbb;transform:scaleX(0.8488);">Terminal</span>
<span class="t" style="left:412.68px;top:688.00px;font-size:13.5px;color:#bbbbbb;transform:scaleX(0.8177);">Python Packages</span>
<span class="t" style="left:538.95px;top:688.00px;font-size:13.5px;color:#bbbbbb;transform:scaleX(0.8475);">Python Console</span>
<span class="t" style="left:1196.47px;top:688.00px;font-size:13.5px;color:#bbbbbb;transform:scaleX(0.8265);">Event Log</span>
<span class="t" style="left:913.0px;top:709.00px;font-size:13.5px;color:#bbbbbb;transform:translateY(0.20px) scaleX(0.9316);">22:43</span>
<span class="t" style="left:957.5px;top:709.00px;font-size:13.5px;color:#bbbbbb;transform:translateY(0.20px) scaleX(0.8084);">CRLF</span>
<span class="t" style="left:999.06px;top:709.00px;font-size:13.5px;color:#bbbbbb;transform:translateY(0.20px) scaleX(0.9445);">UTF-8</span>
<span class="t" style="left:1047.5px;top:709.00px;font-size:13.5px;color:#bbbbbb;transform:translateY(0.20px) scaleX(0.8990);">4 spaces</span>
<span class="t" style="left:1109.04px;top:709.00px;font-size:13.5px;color:#bbbbbb;transform:translateY(0.20px) scaleX(0.9637);">Python 3.9 (testProject)</span>
<span class="t v" style="left:12.54px;top:105.3px;font-size:11.6px;color:#bbbbbb;transform:rotate(-90deg) scaleX(0.9468);">Project</span>
<span class="t v" style="left:12.54px;top:565.0px;font-size:11.6px;color:#bbbbbb;transform:rotate(-90deg) scaleX(0.9895);">Structure</span>
<span class="t v" style="left:12.54px;top:646.6px;font-size:11.6px;color:#bbbbbb;transform:rotate(-90deg) scaleX(0.9148);">Favorites</span>
</div>
</body>
</html>
